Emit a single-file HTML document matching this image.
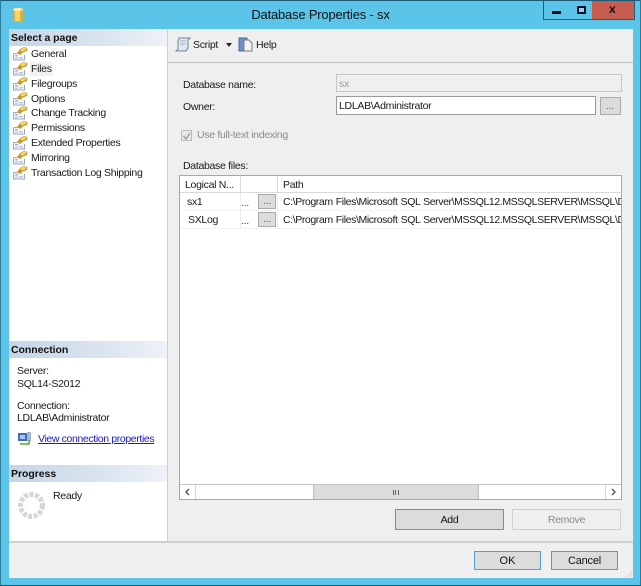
<!DOCTYPE html>
<html><head><meta charset="utf-8"><style>
html,body{margin:0;padding:0}
body{width:641px;height:586px;overflow:hidden;position:relative;background:#5ac4e9;font-family:"Liberation Sans",sans-serif;font-size:10.5px;color:#1a1a1a}
div,span,svg{position:absolute;box-sizing:border-box}
.t{white-space:nowrap;letter-spacing:-.3px;line-height:13px}
.hd{left:9px;width:158px;height:17px;background:linear-gradient(90deg,#c4d5e6,#dde6f0 65%,#eef2f7);font-weight:bold;color:#111;padding:3px 0 0 2px;white-space:nowrap;letter-spacing:-.05px;line-height:13px}
.btn{background:#dcdcdc;border:1px solid #aaa;color:#555;text-align:center}
</style></head><body>
<div style="left:0;top:0;width:641px;height:1px;background:#1d5a75"></div>
<div style="left:0;top:0;width:1px;height:586px;background:#2b7a99"></div>
<div style="left:640px;top:0;width:1px;height:586px;background:#2b7a99"></div>
<div style="left:0;top:585px;width:641px;height:1px;background:#1d5a75"></div>

<svg style="left:12px;top:7px" width="12" height="16" viewBox="0 0 12 16"><rect x="1" y="1" width="10" height="14" rx="2" fill="#e3ad2e"/><rect x="3" y="3" width="5" height="11" fill="#f4d56c"/><ellipse cx="6" cy="2.5" rx="5" ry="1.6" fill="#fbe9a4"/></svg>
<div class="t" style="left:0;top:7px;width:641px;text-align:center;font-size:13px;letter-spacing:-.2px;line-height:16px;color:#111">Database Properties - sx</div>

<div style="left:543px;top:1px;width:27px;height:19px;background:#5ac4e9;border:1px solid #1f5f7c;border-top:0"></div>
<div style="left:569px;top:1px;width:24px;height:19px;background:#5ac4e9;border:1px solid #1f5f7c;border-top:0;border-left:0"></div>
<div style="left:592px;top:1px;width:43px;height:19px;background:#c75c50;border:1px solid #1f5f7c;border-top:0;border-left:0"></div>
<div style="left:552px;top:11px;width:9px;height:3px;background:#0a0a1a"></div>
<div style="left:577px;top:6px;width:9px;height:8px;border:2px solid #0a0a2a;background:#8fd4ef"></div>
<div class="t" style="left:609px;top:2px;font-weight:bold;font-size:12px;line-height:14px;color:#111;letter-spacing:0">x</div>

<!-- client -->
<div style="left:9px;top:29px;width:624px;height:549px;background:#efefef"></div>
<div style="left:9px;top:29px;width:158px;height:512px;background:#fff"></div>
<div style="left:167px;top:29px;width:1px;height:512px;background:#cfcfcf"></div>
<div style="left:9px;top:541px;width:624px;height:2px;background:#cfcfcf"></div>
<div style="left:168px;top:62px;width:465px;height:1px;background:#bdbdbd"></div>

<div class="hd" style="top:29px">Select a page</div>
<div style="left:30px;top:62px;width:23px;height:14px;background:#f1f1f1"></div>

<svg width="0" height="0" style="left:0;top:0"><defs><g id="pg"><path d="M1.5 7.5h4M1.5 7.5v6.5h11V9" fill="#f7f8fc" stroke="#9aa7be" stroke-width="1"/><rect x="3" y="9" width="3" height="1.5" fill="#9db4d8"/><rect x="7" y="11" width="4" height="1.5" fill="#b9c6dc"/><rect x="3" y="11.5" width="3" height="1.5" fill="#c5d0e2"/><path d="M5 7l3.5-4.5L12 1l3.5 1-.5 3-4 1.5L8 9z" fill="#c39a28"/><path d="M8.5 3L12 1.5l3 1-3 2.5-3 .5z" fill="#f0d675"/></g></defs></svg>
<svg style="left:12px;top:46px" width="16" height="15"><use href="#pg"/></svg>
<svg style="left:12px;top:61px" width="16" height="15"><use href="#pg"/></svg>
<svg style="left:12px;top:76px" width="16" height="15"><use href="#pg"/></svg>
<svg style="left:12px;top:91px" width="16" height="15"><use href="#pg"/></svg>
<svg style="left:12px;top:105px" width="16" height="15"><use href="#pg"/></svg>
<svg style="left:12px;top:120px" width="16" height="15"><use href="#pg"/></svg>
<svg style="left:12px;top:135px" width="16" height="15"><use href="#pg"/></svg>
<svg style="left:12px;top:150px" width="16" height="15"><use href="#pg"/></svg>
<svg style="left:12px;top:165px" width="16" height="15"><use href="#pg"/></svg>

<div class="t" style="left:31px;top:48px">General</div>
<div class="t" style="left:31px;top:63px">Files</div>
<div class="t" style="left:31px;top:78px">Filegroups</div>
<div class="t" style="left:31px;top:93px">Options</div>
<div class="t" style="left:31px;top:107px">Change Tracking</div>
<div class="t" style="left:31px;top:122px">Permissions</div>
<div class="t" style="left:31px;top:137px">Extended Properties</div>
<div class="t" style="left:31px;top:152px">Mirroring</div>
<div class="t" style="left:31px;top:167px">Transaction Log Shipping</div>

<div class="hd" style="top:341px">Connection</div>
<div class="t" style="left:17px;top:365px">Server:</div>
<div class="t" style="left:17px;top:378px">SQL14-S2012</div>
<div class="t" style="left:17px;top:400px">Connection:</div>
<div class="t" style="left:17px;top:412px">LDLAB\Administrator</div>
<svg style="left:17px;top:431px" width="15" height="15"><rect x="1" y="2" width="9" height="8" fill="#3f6fc4"/><rect x="3" y="4" width="5" height="4" fill="#a9c8ef"/><rect x="10" y="1" width="4" height="9" fill="#9fb6d8"/><path d="M3 13h9V9" fill="none" stroke="#5aa332" stroke-width="1.5"/></svg>
<div class="t" style="left:38px;top:433px;color:#1a1ad0;text-decoration:underline;letter-spacing:-.37px">View connection properties</div>

<div class="hd" style="top:465px">Progress</div>
<svg style="left:17px;top:491px" width="29" height="29"><circle cx="14.5" cy="14.5" r="11" fill="none" stroke="#d6d6d6" stroke-width="5" stroke-dasharray="4 1.5"/></svg>
<div class="t" style="left:53px;top:490px">Ready</div>

<!-- toolbar -->
<svg style="left:174px;top:36px" width="18" height="17"><path d="M5 2h11l-2 2v8l-2 3H2l2-2V5z" fill="#dfe6ee" stroke="#6f8299" stroke-width="1"/><path d="M6 5h6M6 8h6" stroke="#9fb0c4"/></svg>
<div class="t" style="left:193px;top:39px">Script</div>
<div style="left:226px;top:43px;width:0;height:0;border-left:3.5px solid transparent;border-right:3.5px solid transparent;border-top:4px solid #222"></div>
<svg style="left:238px;top:36px" width="16" height="17"><rect x="1" y="2" width="8" height="13" fill="#6f8fc4" stroke="#4a6aa0"/><path d="M6 4h5l3 3v8H6z" fill="#f4f4f4" stroke="#7a7a7a"/></svg>
<div class="t" style="left:256px;top:39px">Help</div>

<!-- form -->
<div class="t" style="left:183px;top:79px">Database name:</div>
<div style="left:336px;top:74px;width:286px;height:18px;background:#efefef;border:1px solid #c6c6c6"></div>
<div class="t" style="left:339px;top:78px;color:#9a9a9a">sx</div>
<div class="t" style="left:183px;top:101px">Owner:</div>
<div style="left:336px;top:96px;width:260px;height:19px;background:#fff;border:1px solid #9a9a9a"></div>
<div class="t" style="left:339px;top:100px">LDLAB\Administrator</div>
<div class="btn" style="left:600px;top:97px;width:21px;height:18px"></div>
<div class="t" style="left:606px;top:100px;color:#666">...</div>

<div style="left:181px;top:130px;width:11px;height:11px;background:#e8e8e8;border:1px solid #bcbcbc"></div>
<svg style="left:182px;top:131px" width="10" height="10"><path d="M1.5 5l2.5 3 4-6" fill="none" stroke="#9d9d9d" stroke-width="1.4"/></svg>
<div class="t" style="left:197px;top:129px;color:#8a8a8a">Use full-text indexing</div>
<div class="t" style="left:183px;top:160px">Database files:</div>

<!-- grid -->
<div style="left:179px;top:175px;width:443px;height:325px;background:#fff;border:1px solid #a8a8a8"></div>
<div style="left:180px;top:176px;width:441px;height:17px;background:#fff;border-bottom:1px solid #dadada"></div>
<div style="left:240px;top:176px;width:1px;height:17px;background:#dadada"></div>
<div style="left:277px;top:176px;width:1px;height:17px;background:#dadada"></div>
<div class="t" style="left:185px;top:179px">Logical N...</div>
<div class="t" style="left:283px;top:179px">Path</div>

<div style="left:180px;top:210px;width:441px;height:1px;background:#f3f3f3"></div>
<div style="left:180px;top:228px;width:441px;height:1px;background:#f3f3f3"></div>
<div style="left:240px;top:193px;width:1px;height:35px;background:#ececec"></div>
<div style="left:277px;top:193px;width:1px;height:35px;background:#ececec"></div>

<div class="t" style="left:187px;top:196px">sx1</div>
<div class="t" style="left:188px;top:214px">SXLog</div>
<div class="t" style="left:241px;top:197px;color:#444">...</div>
<div class="t" style="left:241px;top:215px;color:#444">...</div>
<div class="btn" style="left:258px;top:194px;width:18px;height:15px"></div>
<div class="btn" style="left:258px;top:212px;width:18px;height:15px"></div>
<div class="t" style="left:263px;top:195px;color:#666">...</div>
<div class="t" style="left:263px;top:213px;color:#666">...</div>
<div style="left:283px;top:193px;width:338px;height:36px;overflow:hidden">
<div class="t" style="left:0;top:3px;letter-spacing:-.4px;word-spacing:.6px">C:\Program Files\Microsoft SQL Server\MSSQL12.MSSQLSERVER\MSSQL\DATA</div>
<div class="t" style="left:0;top:21px;letter-spacing:-.4px;word-spacing:.6px">C:\Program Files\Microsoft SQL Server\MSSQL12.MSSQLSERVER\MSSQL\DATA</div>
</div>

<!-- scrollbar -->
<div style="left:180px;top:484px;width:441px;height:15px;background:#fff;border-top:1px solid #c4c4c4"></div>
<div style="left:195px;top:485px;width:1px;height:14px;background:#d6d6d6"></div>
<div style="left:605px;top:485px;width:1px;height:14px;background:#d6d6d6"></div>
<div style="left:313px;top:485px;width:166px;height:14px;background:#dcdcdc;border-left:1px solid #c0c0c0;border-right:1px solid #c0c0c0"></div>
<div style="left:393px;top:490px;width:6px;height:5px;border-left:1px solid #666;border-right:1px solid #666"></div>
<div style="left:395px;top:490px;width:1px;height:5px;background:#666"></div>
<svg style="left:184px;top:488px" width="8" height="8"><path d="M5 1L2 4l3 3" fill="none" stroke="#555" stroke-width="1.4"/></svg>
<svg style="left:609px;top:488px" width="8" height="8"><path d="M3 1l3 3-3 3" fill="none" stroke="#555" stroke-width="1.4"/></svg>

<!-- buttons -->
<div class="btn" style="left:395px;top:509px;width:109px;height:21px;border-color:#8a8a8a;color:#111;line-height:20px;letter-spacing:-.3px">Add</div>
<div class="btn" style="left:512px;top:509px;width:109px;height:21px;background:#efefef;border-color:#cfcfcf;color:#8a8a8a;line-height:20px;letter-spacing:-.3px">Remove</div>
<div class="btn" style="left:474px;top:551px;width:67px;height:19px;border-color:#5b9bc9;color:#111;line-height:18px;font-size:11px">OK</div>
<div class="btn" style="left:551px;top:551px;width:67px;height:19px;border-color:#8a8a8a;color:#111;line-height:18px;font-size:11px;letter-spacing:-.2px">Cancel</div>
<svg style="left:625px;top:571px" width="8" height="7"><path d="M6 1h1M4 3h1M6 3h1M2 5h1M4 5h1M6 5h1" stroke="#c4c4c4"/></svg>
</body></html>
